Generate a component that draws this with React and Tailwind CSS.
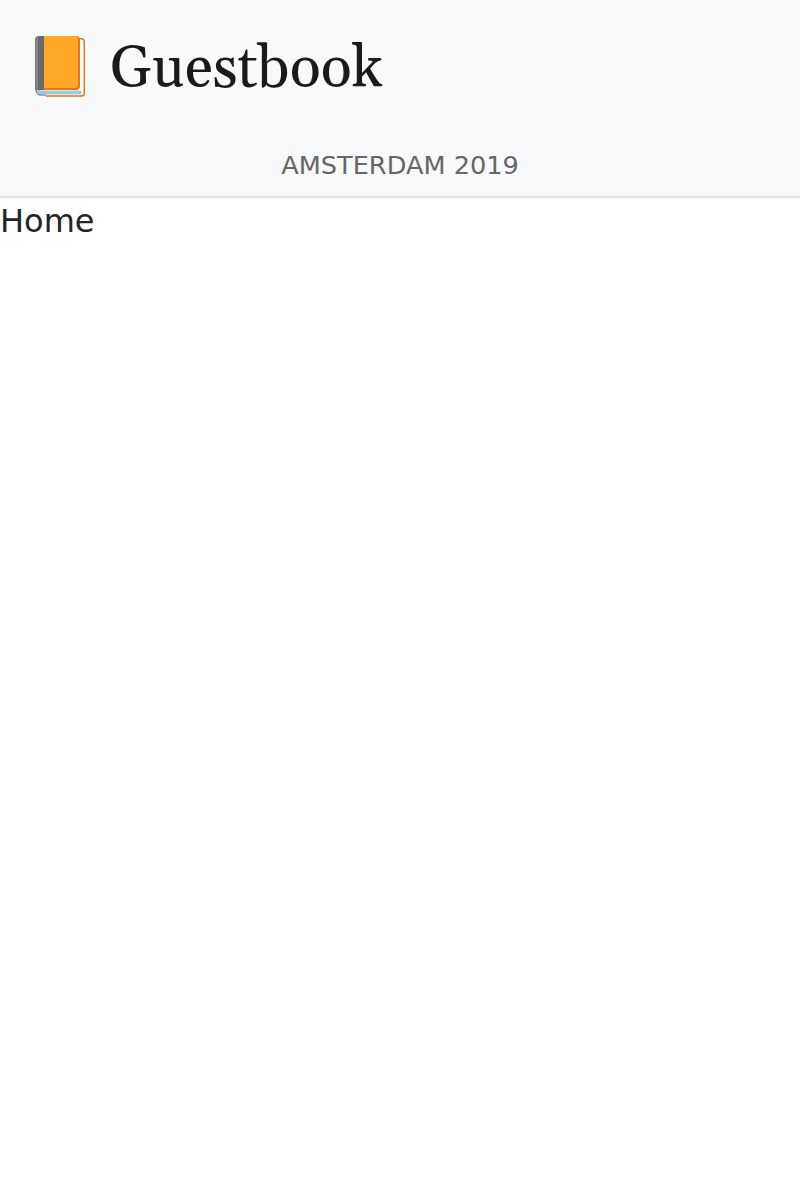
export default function App() {
  return (
    <div className="min-h-[1200px] bg-white font-['DejaVu_Sans',sans-serif] text-[#212529]">
      <header className="h-[198px] bg-[#f8f9fa] border-b-2 border-[#dee2e6] flex flex-col">
        <div className="flex items-center pl-[32px] pt-[31px] h-[72px] box-content">
          <svg width="56" height="72" viewBox="0 0 56 72" className="shrink-0">
            <path d="M40 7.750h9.500a2.750 2.750 0 0 1 2.750 2.750v51.750a2.750 2.750 0 0 1-2.750 2.750H14V56h26z" fill="#fff" />
            <path d="M46 7.750h3.500a2.750 2.750 0 0 1 2.750 2.750v51.750a2.750 2.750 0 0 1-2.750 2.750H14" fill="none" stroke="#e5761a" strokeWidth="1.5" />
            <path d="M3.500 55c0 5.500 1.500 8.500 4.500 8.500h41c.5 0 .5-.5.5-1V59.500H8z" fill="#9ccbde" />
            <path d="M3.500 55c0 5.500 1.500 9 4.500 9h6" fill="none" stroke="#66696c" strokeWidth="1" />
            <path d="M12 5h32a4 4 0 0 1 4 4v46a4 4 0 0 1-4 4H12z" fill="#e5761a" />
            <path d="M12 5h31a3 3 0 0 1 3 3v46a3 3 0 0 1-3 3H12z" fill="#ffa726" />
            <path d="M12 5H7a4 4 0 0 0-4 4v46a4 4 0 0 0 4 4h5z" fill="#66696c" />
            <path d="M7 5.500a3.500 3.500 0 0 0-3.500 3.500V55A3.500 3.500 0 0 0 6 58.500V5.500z" fill="#85888a" />
          </svg>
          <h1 className="ml-[22px] mt-[6px] font-['Gelasio','Liberation_Serif',serif] text-[57.6px] leading-none text-[#1a1a1a]">Guestbook</h1>
        </div>
        <p className="mt-[48px] text-center text-[25.6px] leading-[28px] text-[#666666]">AMSTERDAM 2019</p>
      </header>
      <div className="text-[32px] leading-[46px]">Home</div>
    </div>
  );
}
